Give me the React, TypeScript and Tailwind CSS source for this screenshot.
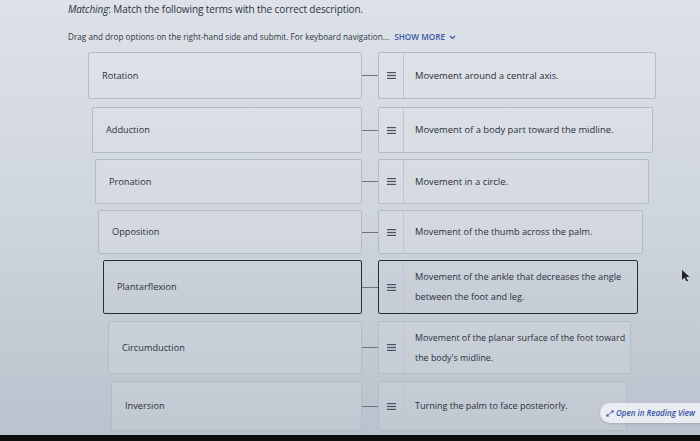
import React from "react";

type Row = {
  term: string;
  desc: string[];
  ml: string;
  w: string;
  h: string;
  mt: string;
  fs: string;
  active?: boolean;
};

const rows: Row[] = [
  { term: "Rotation", desc: ["Movement around a central axis."], ml: "ml-[20px]", w: "w-[278px]", h: "h-[47px]", mt: "mt-0", fs: "text-[9.4px]" },
  { term: "Adduction", desc: ["Movement of a body part toward the midline."], ml: "ml-[24px]", w: "w-[275px]", h: "h-[46px]", mt: "mt-[8px]", fs: "text-[9.4px]" },
  { term: "Pronation", desc: ["Movement in a circle."], ml: "ml-[27px]", w: "w-[271px]", h: "h-[45px]", mt: "mt-[6px]", fs: "text-[9.4px]" },
  { term: "Opposition", desc: ["Movement of the thumb across the palm."], ml: "ml-[30px]", w: "w-[265px]", h: "h-[44px]", mt: "mt-[6px]", fs: "text-[9.2px]" },
  { term: "Plantarflexion", desc: ["Movement of the ankle that decreases the angle", "between the foot and leg."], ml: "ml-[35px]", w: "w-[260px]", h: "h-[54px]", mt: "mt-[6px]", fs: "text-[9.2px]", active: true },
  { term: "Circumduction", desc: ["Movement of the planar surface of the foot toward", "the body's midline."], ml: "ml-[40px]", w: "w-[253px]", h: "h-[53px]", mt: "mt-[7px]", fs: "text-[8.9px]" },
  { term: "Inversion", desc: ["Turning the palm to face posteriorly."], ml: "ml-[43px]", w: "w-[249px]", h: "h-[50px]", mt: "mt-[7px]", fs: "text-[9px]" },
];

function Handle() {
  return (
    <svg width="9" height="7" viewBox="0 0 9 7" className="shrink-0">
      <rect x="0" y="0" width="9" height="1.2" fill="#4a5260" />
      <rect x="0" y="2.9" width="9" height="1.2" fill="#4a5260" />
      <rect x="0" y="5.8" width="9" height="1.2" fill="#4a5260" />
    </svg>
  );
}

export default function App() {
  return (
    <div
      className="relative w-[700px] h-[441px] overflow-hidden bg-gradient-to-b from-[#dde2e8] via-[#cfd5dd] to-[#b9c1cc]"
      style={{ fontFamily: '"Open Sans", "Liberation Sans", sans-serif' }}
    >
      <div className="pl-[68px] pt-[1px] text-[#2b3240]">
        <div className="text-[10px] leading-[16px] tracking-[-0.1px]">
          <span className="italic">Matching</span>: Match the following terms with the correct description.
        </div>
        <div className="mt-[14px] flex items-center text-[8.2px] leading-[12px] text-[#2f3644]">
          <span>Drag and drop options on the right-hand side and submit. For keyboard navigation...</span>
          <span className="ml-[5px] text-[#3a56a8] font-semibold">SHOW MORE</span>
          <svg width="7" height="5" viewBox="0 0 7 5" className="ml-[4px]">
            <path d="M1 1 L3.5 3.5 L6 1" fill="none" stroke="#3a56a8" strokeWidth="1.2" />
          </svg>
        </div>

        <div className="mt-[9px] flex flex-col">
          {rows.map((r, i) => (
            <div key={i} className={`flex items-stretch ${r.h} ${r.mt}`}>
              <div className="w-[294px] flex">
                <div
                  className={`${r.ml} flex-1 flex items-center pl-[13px] text-[9.2px] text-[#2a303c] ${
                    r.active
                      ? "border-[1.5px] border-[#2a2e35] rounded-[2px]"
                      : "border border-[#b4bbc4] rounded-[2px] bg-white/10"
                  }`}
                >
                  {r.term}
                </div>
              </div>
              <div className="w-[16px] flex items-center">
                <div className="w-full h-px bg-[#6d7480]" />
              </div>
              <div
                className={`${r.w} flex rounded-[2px] ${
                  r.active ? "border-[1.5px] border-[#2a2e35]" : "border border-[#b4bbc4] bg-white/10"
                }`}
              >
                <div className="w-[25px] shrink-0 flex items-center justify-center border-r border-[#bfc5cd]">
                  <Handle />
                </div>
                <div className={`flex-1 min-w-0 flex flex-col justify-center pl-[11px] ${r.fs} leading-[20px] text-[#2a303c] whitespace-nowrap`}>
                  {r.desc.map((d, j) => (
                    <div key={j}>{d}</div>
                  ))}
                </div>
              </div>
            </div>
          ))}
        </div>
      </div>

      <svg className="absolute left-[681px] top-[270px]" width="9" height="12" viewBox="0 0 9 12">
        <path d="M1 0 L1 10 L3.5 7.5 L5.5 11.5 L7 10.8 L5 7 L8.5 7 Z" fill="#1d2128" />
      </svg>

      <div className="absolute left-[600px] top-[403px] h-[20px] w-[110px] rounded-l-full bg-[#e9edf2] shadow-sm flex items-center pl-[6px] text-[8px] font-semibold italic text-[#3550a0]">
        <span className="mr-[4px] text-[#3550a0]">⤢</span>
        <span>Open in Reading View</span>
      </div>

      <div className="absolute left-0 bottom-0 w-full h-[6px] bg-[#0d0e10]" />
    </div>
  );
}
